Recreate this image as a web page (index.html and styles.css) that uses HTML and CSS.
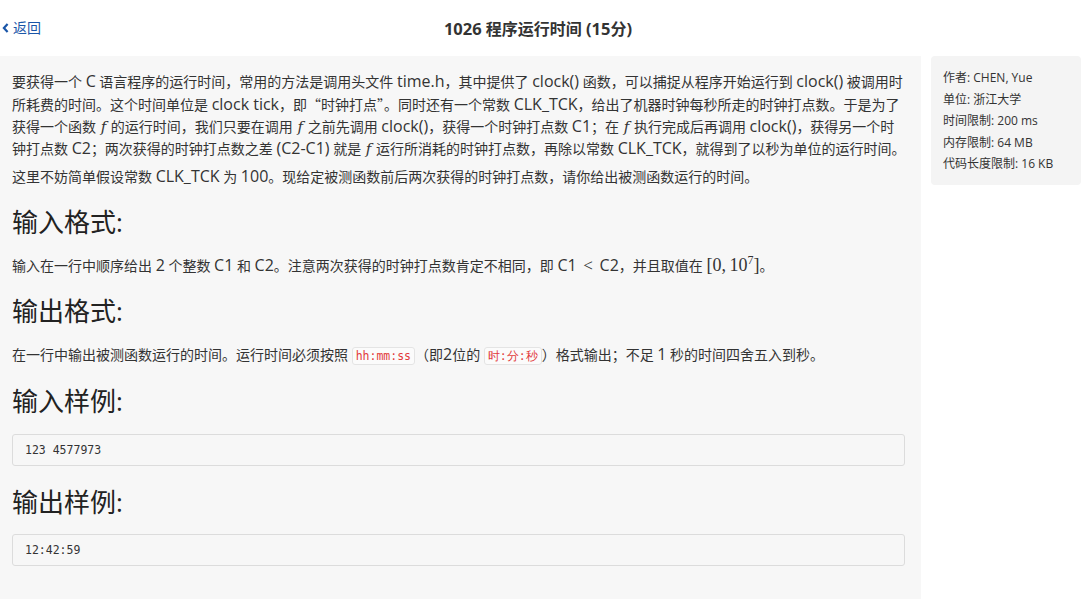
FILE: index.html
```html
<!DOCTYPE html>
<html lang="zh">
<head>
<meta charset="utf-8">
<link rel="stylesheet" href="styles.css">
</head>
<body>
<header class="topbar">
  <a class="back" href="#"><svg class="chev" width="7" height="10" viewBox="0 0 7 10"><path d="M5.6 1 L1.9 5 L5.6 9" fill="none" stroke="#1a56a8" stroke-width="2.2"/></svg>返回</a>
  <h1 class="title"><span class="en">1026</span> 程序运行时间 <span class="en">(15</span>分<span class="en">)</span></h1>
</header>
<div class="layout">
  <main class="problem">
    <p class="p-first">要获得一个 <span class="en">C</span> 语言程序的运行时间，常用的方法是调用头文件 <span class="en">time.h</span>，其中提供了 <span class="en">clock()</span> 函数，可以捕捉从程序开始运行到 <span class="en">clock()</span> 被调用时<br>所耗费的时间。这个时间单位是 <span class="en">clock tick</span>，即<span class="cjk">“</span>时钟打点<span class="cjk">”</span>。同时还有一个常数 <span class="en">CLK_TCK</span>，给出了机器时钟每秒所走的时钟打点数。于是为了<br>获得一个函数 <i class="m">f</i> 的运行时间，我们只要在调用 <i class="m">f</i> 之前先调用 <span class="en">clock()</span>，获得一个时钟打点数 <span class="en">C1</span>；在 <i class="m">f</i> 执行完成后再调用 <span class="en">clock()</span>，获得另一个时<br>钟打点数 <span class="en">C2</span>；两次获得的时钟打点数之差 <span class="en">(C2-C1)</span> 就是 <i class="m">f</i> 运行所消耗的时钟打点数，再除以常数 <span class="en">CLK_TCK</span>，就得到了以秒为单位的运行时间。</p>
    <p>这里不妨简单假设常数 <span class="en">CLK_TCK</span> 为 <span class="en">100</span>。现给定被测函数前后两次获得的时钟打点数，请你给出被测函数运行的时间。</p>
    <h2>输入格式:</h2>
    <p>输入在一行中顺序给出 <span class="en">2</span> 个整数 <span class="en">C1</span> 和 <span class="en">C2</span>。注意两次获得的时钟打点数肯定不相同，即 <span class="en">C1</span> <span class="op">&lt;</span> <span class="en">C2</span>，并且取值在 <span class="mathr">[0,&thinsp;10<sup>7</sup>]</span>。</p>
    <h2>输出格式:</h2>
    <p>在一行中输出被测函数运行的时间。运行时间必须按照 <code>hh:mm:ss</code>（即<span class="en">2</span>位的 <code>时:分:秒</code>）格式输出；不足 <span class="en">1</span> 秒的时间四舍五入到秒。</p>
    <h2>输入样例:</h2>
    <pre class="sample">123 4577973</pre>
    <h2 class="h-out">输出样例:</h2>
    <pre class="sample">12:42:59</pre>
  </main>
  <aside class="info">
    <div>作者: CHEN, Yue</div>
    <div>单位: 浙江大学</div>
    <div>时间限制: 200 ms</div>
    <div>内存限制: 64 MB</div>
    <div>代码长度限制: 16 KB</div>
  </aside>
</div>
</body>
</html>
```
FILE: styles.css
```css
html, body {
  margin: 0;
  padding: 0;
  background: #fff;
  font-family: "Open Sans", "Noto Sans CJK SC", sans-serif;
  color: #333;
}
.topbar {
  height: 56px;
  display: flex;
  align-items: center;
  position: relative;
}
.back {
  display: flex;
  align-items: center;
  gap: 4px;
  padding-left: 2px;
  color: #1a56a8;
  text-decoration: none;
  font-size: 14px;
  line-height: 20px;
}
.chev { display: block; }
.title {
  position: absolute;
  left: 0;
  right: 14px;
  top: 0;
  margin: 0;
  text-align: center;
  font-size: 16px;
  line-height: 58px;
  font-weight: 700;
  color: #333;
}
.title .en { font-size: 16.5px; }
.layout {
  display: flex;
  align-items: flex-start;
  gap: 10px;
}
.problem {
  width: 921px;
  flex: none;
  box-sizing: border-box;
  background: #f7f7f7;
  padding: 15px 4px 32px 12px;
  min-height: 543px;
}
.problem p {
  margin: 0;
  font-size: 14px;
  line-height: 22px;
}
.en {
  font-size: 16px;
  line-height: 1;
}
.cjk {
  font-family: "Noto Sans CJK SC", sans-serif;
}
.problem p.p-first { margin-bottom: 6px; }
.m {
  font-family: "DejaVu Serif", "Liberation Serif", serif;
  font-style: italic;
  font-size: 15px;
  line-height: 1;
  padding: 0 1px;
}
.op {
  font-family: "Liberation Serif", serif;
  font-size: 17px;
  line-height: 1;
  padding: 0 3px;
}
.mathr {
  font-family: "Liberation Serif", serif;
  font-size: 18px;
  line-height: 1;
}
.mathr sup {
  font-size: 12px;
  line-height: 0;
}
h2 {
  margin: 16px 12px 15px 0;
  font-size: 26px;
  line-height: 36px;
  font-weight: 400;
  color: #222;
}
h2.h-out { margin-top: 18px; margin-bottom: 14px; }
code {
  font-family: "DejaVu Sans Mono", monospace;
  font-size: 11.5px;
  color: #e23b3b;
  background: #fbfbfb;
  border: 1px solid #e4e4e4;
  border-radius: 3px;
  padding: 1px 3px;
}
.sample {
  margin: 0 12px 0 0;
  box-sizing: border-box;
  height: 32px;
  border: 1px solid #dcdcdc;
  border-radius: 3px;
  padding: 0 12px;
  font-family: "DejaVu Sans Mono", monospace;
  font-size: 11.5px;
  line-height: 30px;
  color: #333;
  background: #f7f7f7;
}
.info {
  width: 150px;
  flex: none;
  box-sizing: border-box;
  background: #f4f4f4;
  border-radius: 4px;
  padding: 11px 12px 10px;
  font-size: 12px;
  line-height: 21.6px;
  color: #333;
}
```
